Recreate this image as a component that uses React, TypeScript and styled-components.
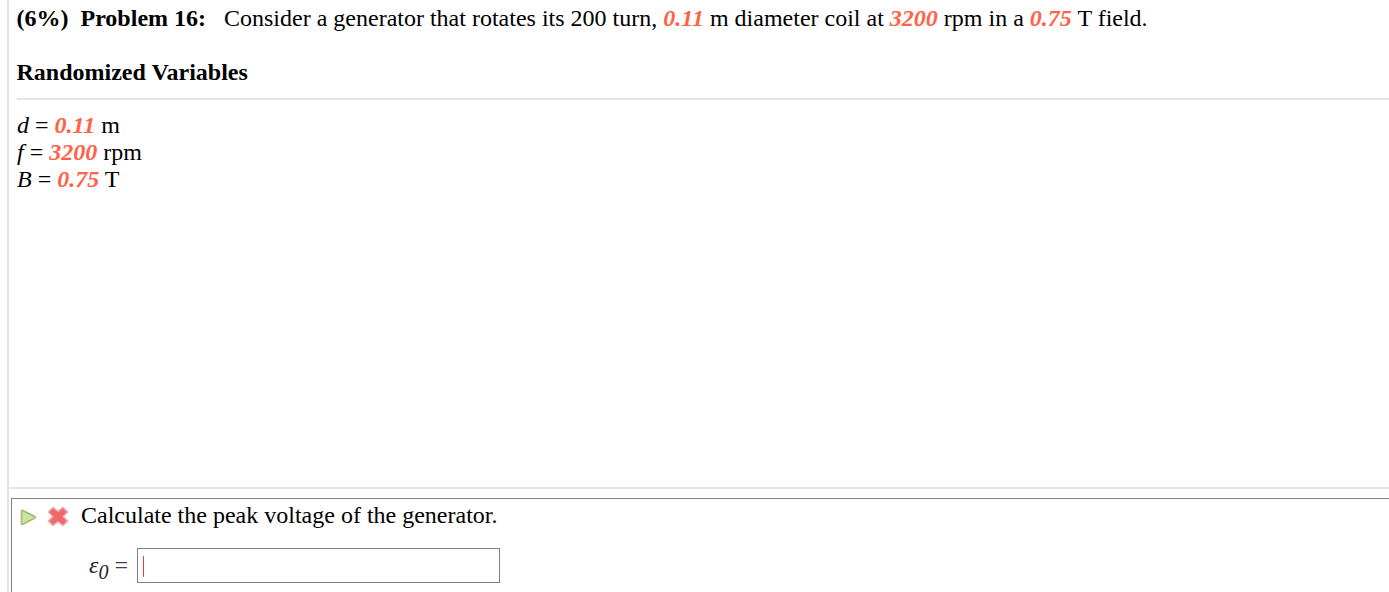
import styled, { createGlobalStyle } from 'styled-components';

const GlobalStyle = createGlobalStyle`
  html, body {
    margin: 0;
    padding: 0;
    height: 100%;
    overflow: hidden;
    background: #fff;
  }
`;

const Page = styled.div`
  box-sizing: border-box;
  width: 1389px;
  height: 592px;
  margin-left: 7px;
  padding-top: 5px;
  border-left: 2px solid #e2e2e2;
  font-family: 'Liberation Serif', 'Times New Roman', serif;
  font-size: 24px;
  line-height: 27px;
  color: #000;
  overflow: hidden;
`;

const Statement = styled.div`
  padding-left: 7.5px;
  white-space: pre;
`;

const Strong = styled.b`
  font-weight: bold;
`;

const Value = styled.i`
  color: #ff6347;
  font-weight: bold;
`;

const Heading = styled.div`
  margin-top: 27px;
  padding-left: 7.5px;
  font-weight: bold;
`;

const HeadingRule = styled.hr`
  margin: 12px 0 0 8px;
  height: 2px;
  border: none;
  background: #e6e6e6;
`;

const Variables = styled.div`
  margin-top: 12px;
  padding-left: 8px;
  height: 375px;
`;

const VariableRow = styled.div`
  white-space: pre;
`;

const SectionRule = styled.hr`
  margin: 0;
  height: 2px;
  border: none;
  background: #e6e6e6;
`;

const QuestionBox = styled.section`
  box-sizing: border-box;
  margin: 9px 0 0 2px;
  height: 120px;
  border: 1px solid #808080;
  border-right: none;
  padding: 3px 0 0 7px;
`;

const QuestionRow = styled.div`
  display: flex;
  align-items: center;
`;

const IconSlot = styled.svg`
  flex: none;
  display: block;
`;

const PlaySlot = styled.span`
  display: block;
  margin-top: 3px;
`;

const CrossSlot = styled.span`
  display: block;
  margin-left: 10px;
  margin-top: 1px;
`;

const QuestionText = styled.span`
  margin-left: 12px;
`;

const AnswerRow = styled.div`
  display: flex;
  align-items: center;
  margin: 19px 0 0 70px;
`;

const Symbol = styled.span`
  font-style: italic;
  color: #222;
  white-space: pre;
`;

const Sub = styled.sub`
  font-size: 20px;
  line-height: 0;
`;

const Equals = styled.span`
  margin: 0 9px 0 6px;
  color: #444;
`;

const AnswerInput = styled.div`
  box-sizing: border-box;
  width: 363px;
  height: 35px;
  border: 1px solid #808080;
  padding: 7px 0 0 5px;
`;

const Caret = styled.div`
  width: 1px;
  height: 21px;
  background: #ee3b3b;
`;

const PlayIcon = () => (
  <IconSlot width="18" height="17" viewBox="0 0 18 17">
    <path d="M2.5 2 Q2.5 1 4 1.6 L15.5 7.4 Q17 8.3 15.5 9.2 L4 15.2 Q2.5 15.8 2.5 14.8 Z" fill="#cde29e" stroke="#a4c274" strokeWidth="1.8" strokeLinejoin="round" />
  </IconSlot>
);

const CrossIcon = () => (
  <IconSlot width="22" height="21" viewBox="0 0 22 21">
    <path d="M6 1.5 L11 5.5 L16 1.5 L20.5 6 L16 10.5 L20.5 15 L16 19.5 L11 15.5 L6 19.5 L1.5 15 L6 10.5 L1.5 6 Z" fill="#f0686c" stroke="#eba5a7" strokeWidth="1.6" strokeLinejoin="round" />
  </IconSlot>
);

export default function App() {
  return (
    <>
      <GlobalStyle />
      <Page>
        <Statement>
          <Strong>(6%)  Problem 16:</Strong>{'   '}Consider a generator that rotates its 200 turn, <Value>0.11</Value> m diameter coil at <Value>3200</Value> rpm in a <Value>0.75</Value> T field.
        </Statement>
        <Heading>Randomized Variables</Heading>
        <HeadingRule />
        <Variables>
          <VariableRow><i>d</i> = <Value>0.11</Value> m</VariableRow>
          <VariableRow><i>f</i> = <Value>3200</Value> rpm</VariableRow>
          <VariableRow><i>B</i> = <Value>0.75</Value> T</VariableRow>
        </Variables>
        <SectionRule />
        <QuestionBox>
          <QuestionRow>
            <PlaySlot><PlayIcon /></PlaySlot>
            <CrossSlot><CrossIcon /></CrossSlot>
            <QuestionText>Calculate the peak voltage of the generator.</QuestionText>
          </QuestionRow>
          <AnswerRow>
            <Symbol>ε<Sub>0</Sub></Symbol>
            <Equals>=</Equals>
            <AnswerInput><Caret /></AnswerInput>
          </AnswerRow>
        </QuestionBox>
      </Page>
    </>
  );
}
